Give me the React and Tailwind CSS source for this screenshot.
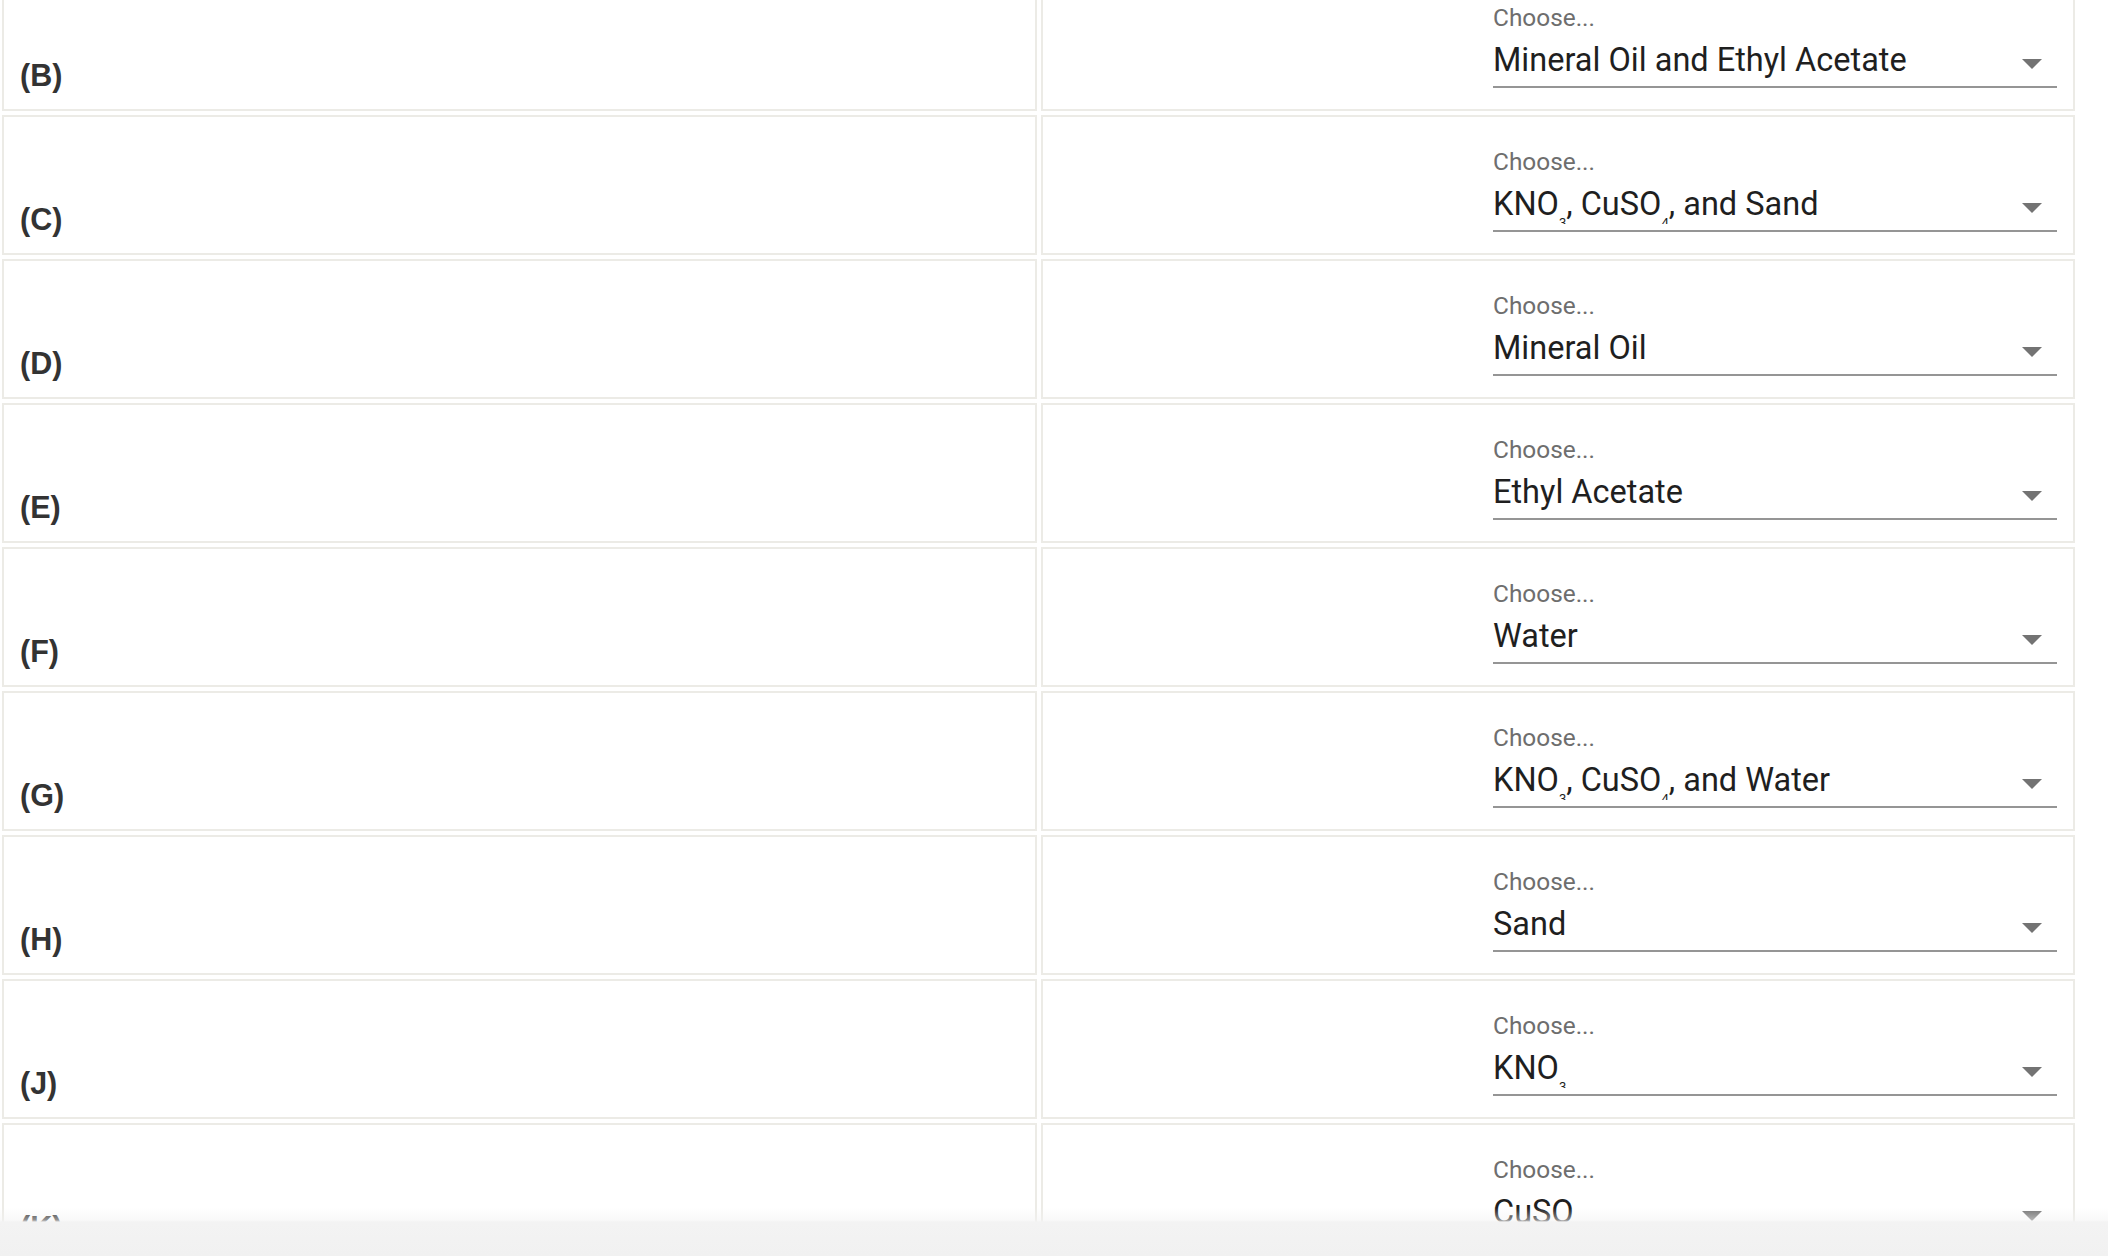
import React from 'react';

const rows = [
    { label: '(B)', value: ['Mineral Oil and Ethyl Acetate'] },
    { label: '(C)', value: ['KNO', { sub: '3' }, ', CuSO', { sub: '4' }, ', and Sand'] },
    { label: '(D)', value: ['Mineral Oil'] },
    { label: '(E)', value: ['Ethyl Acetate'] },
    { label: '(F)', value: ['Water'] },
    { label: '(G)', value: ['KNO', { sub: '3' }, ', CuSO', { sub: '4' }, ', and Water'] },
    { label: '(H)', value: ['Sand'] },
    { label: '(J)', value: ['KNO', { sub: '3' }] },
    { label: '(K)', value: ['CuSO', { sub: '4' }] },
];

function Value({ parts }) {
    return (
        <span>
            {parts.map((p, i) =>
                typeof p === 'string' ? (
                    <span key={i}>{p}</span>
                ) : (
                    <span key={i} className="inline-block text-[13px] leading-none align-[-12px]">
                        {p.sub}
                    </span>
                )
            )}
        </span>
    );
}

function SelectField({ parts }) {
    return (
        <div className="w-[564px] flex flex-col font-['Roboto',sans-serif]">
            {/* floating label */}
            <div className="mt-[31px] h-[28px] text-[24.4px] leading-[28px] text-[#6e6e6e]">Choose...</div>
            <div className="mt-[9px] h-[39px] flex items-start overflow-hidden">
                <div className="flex-1 text-[32.5px] leading-[39px] text-[#1f1f1f] whitespace-nowrap">
                    <Value parts={parts} />
                </div>
                <svg className="mt-[18px] mr-[15px] shrink-0" width="20" height="10" viewBox="0 0 20 10">
                    <polygon points="0,0 20,0 10,10" fill="#737373" />
                </svg>
            </div>
            <div className="mt-[6px] h-[2px] bg-[#959595]" />
        </div>
    );
}

export default function App() {
    return (
        <div className="relative h-[1256px] overflow-hidden bg-white">
            <div className="flex flex-col gap-[4px] mt-[-29px] pl-[2px]">
                {rows.map((row) => (
                    <div key={row.label} className="flex gap-[4px]">
                        <div className="w-[1035px] h-[140px] border-2 border-[#ecebe6] pl-[16px] pt-[87px]">
                            <span className="font-['Liberation_Sans',Arial,sans-serif] font-bold text-[30.5px] leading-[30px] text-[#333333]">
                                {row.label}
                            </span>
                        </div>
                        <div className="w-[1034px] h-[140px] border-2 border-[#ecebe6] flex justify-end pr-[16px]">
                            <SelectField parts={row.value} />
                        </div>
                    </div>
                ))}
            </div>

            {/* bottom bar */}
            <div className="absolute left-0 right-0 bottom-0 h-[48px] bg-[linear-gradient(to_bottom,rgba(243,243,243,0)_0px,rgba(243,243,243,0.5)_12px,#f3f3f3_14px,#f1f1f1_100%)]" />
        </div>
    );
}
